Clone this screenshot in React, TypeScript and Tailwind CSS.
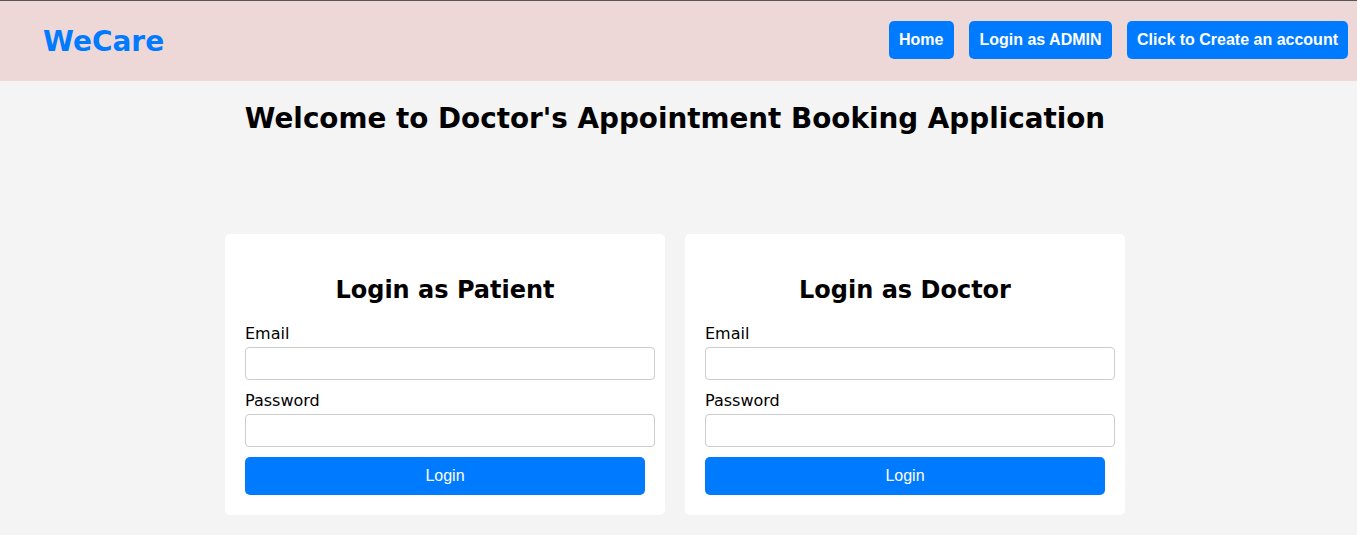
const dejavu = "font-['DejaVu_Sans',Verdana,sans-serif]";
const arial = "font-['Liberation_Sans',Arial,sans-serif]";

function LoginCard({ title }: { title: string }) {
  return (
    <div className="w-[440px] bg-white rounded-[5px] pt-5 pb-5 pl-5 pr-[10px]">
      <h2 className={`${dejavu} text-[24px] font-bold text-center text-black mt-[22px] mb-[19px] pr-[10px] leading-[28px]`}>
        {title}
      </h2>
      <label className={`${dejavu} block text-[16px] leading-[21px] text-black mb-[3px]`}>Email</label>
      <input
        type="email"
        className="block w-[410px] h-[33px] border border-[#ccc] rounded-[4px] bg-white mb-[10px] px-2 outline-none"
      />
      <label className={`${dejavu} block text-[16px] leading-[21px] text-black mb-[3px]`}>Password</label>
      <input
        type="password"
        className="block w-[410px] h-[33px] border border-[#ccc] rounded-[4px] bg-white mb-[10px] px-2 outline-none"
      />
      <button
        type="button"
        className={`${arial} block w-[400px] h-[38px] bg-[#007bff] text-white text-[16px] rounded-[5px]`}
      >
        Login
      </button>
    </div>
  );
}

export default function App() {
  return (
    <div className="min-h-[535px] bg-[#f4f4f4] border-t border-[#555]">
      <nav className="h-[80px] bg-[#edd8d7] flex items-start justify-between pl-[43px] pr-[9px]">
        <div className={`${dejavu} text-[28px] font-bold text-[#007bff] mt-[23px] leading-[36px]`}>WeCare</div>
        <div className={`${arial} flex gap-[15px] mt-[20px] text-white font-bold text-[16px]`}>
          <button type="button" className="h-[38px] px-[10.5px] bg-[#007bff] rounded-[5px]">Home</button>
          <button type="button" className="h-[38px] px-[10.5px] bg-[#007bff] rounded-[5px]">Login as ADMIN</button>
          <button type="button" className="h-[38px] px-[10px] bg-[#007bff] rounded-[5px]">Click to Create an account</button>
        </div>
      </nav>
      <main className="w-[1350px]">
        <h1 className={`${dejavu} text-center text-[27.8px] font-bold text-black leading-[34px] pt-[21px]`}>
          Welcome to Doctor's Appointment Booking Application
        </h1>
        <div className="flex justify-center gap-5 mt-[98px] pb-5">
          <LoginCard title="Login as Patient" />
          <LoginCard title="Login as Doctor" />
        </div>
      </main>
    </div>
  );
}
